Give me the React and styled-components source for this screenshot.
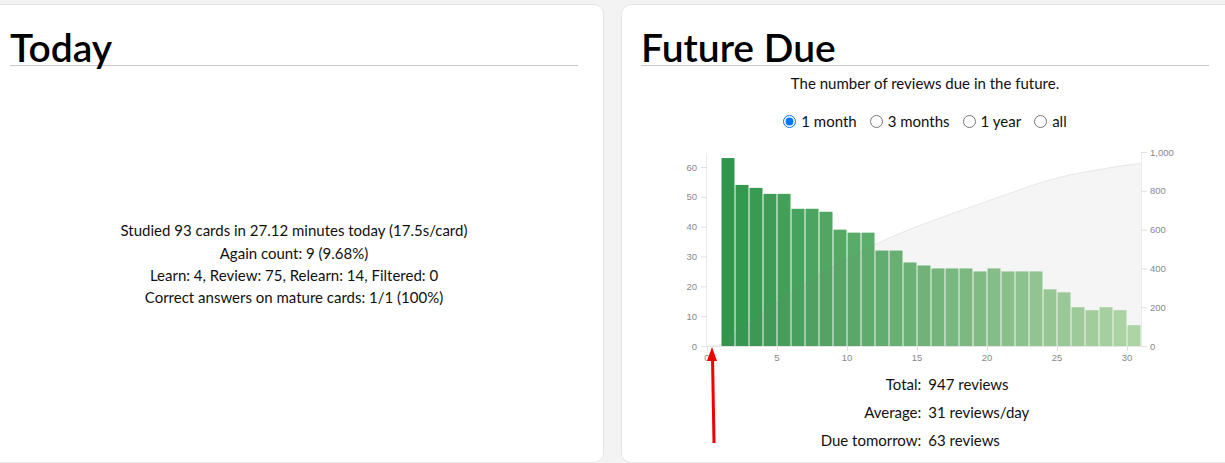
import styled, { createGlobalStyle } from "styled-components";

const GlobalStyle = createGlobalStyle`
  html, body {
    margin: 0;
    padding: 0;
    background: #f3f3f3;
    overflow: hidden;
  }
  body {
    font-family: "Lato", "Noto Sans", sans-serif;
    color: #111;
  }
`;

const counts = [0, 63, 54, 53, 51, 51, 46, 46, 45, 39, 38, 38, 32, 32, 28, 27, 26, 26, 26, 25, 26, 25, 25, 25, 19, 18, 13, 12, 13, 12, 7];

const X0 = 66;
const DAY = 14;
const Y0 = 203;
const yLeft = v => Y0 - v * 2.983;
const yRight = v => Y0 - v * 0.194;

function barColor(d) {
  const t = (d - 1) / 29;
  const a = [48, 150, 76];
  const b = [178, 219, 168];
  const c = a.map((v, i) => Math.round(v + (b[i] - v) * t));
  return `rgb(${c[0]},${c[1]},${c[2]})`;
}

// same smoothing as d3.curveBasis
function basisPath(pts) {
  const f = n => n.toFixed(1);
  let d = `M${f(pts[0][0])},${f(pts[0][1])}`;
  let [x0, y0] = pts[0];
  let [x1, y1] = pts[1];
  d += ` L${f((5 * x0 + x1) / 6)},${f((5 * y0 + y1) / 6)}`;
  const bez = (x, y) => {
    d += ` C${f((2 * x0 + x1) / 3)},${f((2 * y0 + y1) / 3)} ${f((x0 + 2 * x1) / 3)},${f((y0 + 2 * y1) / 3)} ${f((x0 + 4 * x1 + x) / 6)},${f((y0 + 4 * y1 + y) / 6)}`;
  };
  for (let i = 2; i < pts.length; i++) {
    const [x, y] = pts[i];
    bez(x, y);
    x0 = x1; y0 = y1; x1 = x; y1 = y;
  }
  bez(x1, y1);
  d += ` L${f(x1)},${f(y1)}`;
  return d;
}

const FutureChart = () => {
  let sum = 0;
  const pts = [[X0, Y0]];
  counts.forEach((c, d) => {
    sum += c;
    pts.push([X0 + DAY * (d + 1), yRight(sum)]);
  });
  const line = basisPath(pts);
  const area = `${line} L${X0 + DAY * 31},${Y0} L${X0},${Y0} Z`;

  return (
    <ChartSvg width="567" height="226" viewBox="0 0 567 226">
      <g>
        {counts.map((c, d) =>
          c > 0 ? (
            <rect
              key={d}
              x={X0 + DAY * d + 0.5}
              y={yLeft(c)}
              width={DAY - 1}
              height={Y0 - yLeft(c)}
              fill={barColor(d)}
            />
          ) : null
        )}
      </g>
      <path d={area} fill="grey" fillOpacity="0.08" />
      <path d={line} fill="none" stroke="grey" strokeOpacity="0.16" />

      {/* left axis */}
      <line x1={X0 - 0.5} y1={10} x2={X0 - 0.5} y2={Y0} stroke="#ececec" />
      {[0, 10, 20, 30, 40, 50, 60].map(v => (
        <g key={v}>
          <line x1={X0 - 6} y1={yLeft(v) + 0.5} x2={X0} y2={yLeft(v) + 0.5} stroke="#e0e0e0" />
          <AxisText x={X0 - 10} y={yLeft(v) + 3.5} textAnchor="end">{v}</AxisText>
        </g>
      ))}

      {/* right axis */}
      <line x1={X0 + DAY * 31 + 0.5} y1={yRight(1000)} x2={X0 + DAY * 31 + 0.5} y2={Y0} stroke="#ececec" />
      {[0, 200, 400, 600, 800, 1000].map(v => (
        <g key={v}>
          <line x1={X0 + DAY * 31} y1={yRight(v) + 0.5} x2={X0 + DAY * 31 + 6} y2={yRight(v) + 0.5} stroke="#e0e0e0" />
          <AxisText x={X0 + DAY * 31 + 9} y={yRight(v) + 3.5}>{v.toLocaleString("en-US")}</AxisText>
        </g>
      ))}

      {/* bottom axis */}
      <line x1={X0 - 6} y1={Y0 + 0.5} x2={X0 + DAY * 31} y2={Y0 + 0.5} stroke="#e6e6e6" />
      {[0, 5, 10, 15, 20, 25, 30].map(v => (
        <g key={v}>
          <line x1={X0 + DAY * v + 0.5} y1={Y0} x2={X0 + DAY * v + 0.5} y2={Y0 + 5} stroke="#e0e0e0" />
          <AxisText x={X0 + DAY * v} y={Y0 + 15} textAnchor="middle">{v}</AxisText>
        </g>
      ))}
    </ChartSvg>
  );
};

const ranges = ["1 month", "3 months", "1 year", "all"];

export default function App() {
  return (
    <>
      <GlobalStyle />
      <Viewport>
        <Page>
          <Card>
            <Title>Today</Title>
            <TodayBody>
              <div>Studied 93 cards in 27.12 minutes today (17.5s/card)</div>
              <div>Again count: 9 (9.68%)</div>
              <div>Learn: 4, Review: 75, Relearn: 14, Filtered: 0</div>
              <div>Correct answers on mature cards: 1/1 (100%)</div>
            </TodayBody>
          </Card>

          <Card>
            <Title>Future Due</Title>
            <Subtitle>The number of reviews due in the future.</Subtitle>
            <RangeRow>
              {ranges.map((r, i) => (
                <RangeLabel key={r}>
                  <input type="radio" name="range" defaultChecked={i === 0} />
                  {r}
                </RangeLabel>
              ))}
            </RangeRow>
            <FutureChart />
            <StatsTable>
              <tbody>
                <tr><th>Total:</th><td>947 reviews</td></tr>
                <tr><th>Average:</th><td>31 reviews/day</td></tr>
                <tr><th>Due tomorrow:</th><td>63 reviews</td></tr>
              </tbody>
            </StatsTable>
          </Card>

          <Arrow width="20" height="100" viewBox="0 0 20 100">
            <line x1="10.5" y1="10" x2="12" y2="96" stroke="#f00000" strokeWidth="3" />
            <polygon points="10,0 5,14 15,14" fill="#f00000" />
          </Arrow>
        </Page>
      </Viewport>
    </>
  );
}

const Viewport = styled.div`
  width: 100%;
  height: 463px;
  overflow: hidden;
`;

const Page = styled.div`
  position: relative;
  display: grid;
  grid-template-columns: 614px 614px;
  gap: 17px;
  width: 1245px;
  margin: 4px 0 0 -10px;
  align-items: stretch;
`;

const Card = styled.div`
  background: #fff;
  border: 1px solid #e6e6e6;
  border-radius: 10px;
  padding: 24px 25px 8px 19px;
  display: flex;
  flex-direction: column;
`;

const Title = styled.h1`
  margin: 0;
  font-size: 39px;
  font-weight: 600;
  line-height: 36px;
  color: #000;
  border-bottom: 1px solid #c8c8c8;
`;

const TodayBody = styled.div`
  flex: 1;
  display: flex;
  flex-direction: column;
  justify-content: center;
  align-items: center;
  font-size: 15px;
  line-height: 22.4px;
  text-align: center;
  padding-top: 8px;
`;

const Subtitle = styled.div`
  text-align: center;
  font-size: 15px;
  line-height: 17px;
  margin-top: 9px;
`;

const RangeRow = styled.div`
  display: flex;
  justify-content: center;
  gap: 13px;
  margin-top: 21px;
  font-size: 15px;
  line-height: 17px;
`;

const RangeLabel = styled.label`
  display: flex;
  align-items: center;
  gap: 5px;

  input {
    margin: 0;
    width: 13px;
    height: 13px;
  }
`;

const ChartSvg = styled.svg`
  display: block;
  flex-shrink: 0;
  margin-top: 13px;
`;

const AxisText = styled.text`
  font-family: "Liberation Sans", sans-serif;
  font-size: 9.5px;
  fill: #888;
`;

const StatsTable = styled.table`
  margin: 1px auto 0;
  border-collapse: collapse;
  font-size: 15px;
  line-height: 17px;

  th {
    font-weight: 400;
    text-align: right;
    padding: 5.5px 3px 5.5px 0;
  }
  td {
    text-align: left;
    padding: 5.5px 0 5.5px 4px;
  }
`;

const Arrow = styled.svg`
  position: absolute;
  left: 712px;
  top: 343px;
`;
